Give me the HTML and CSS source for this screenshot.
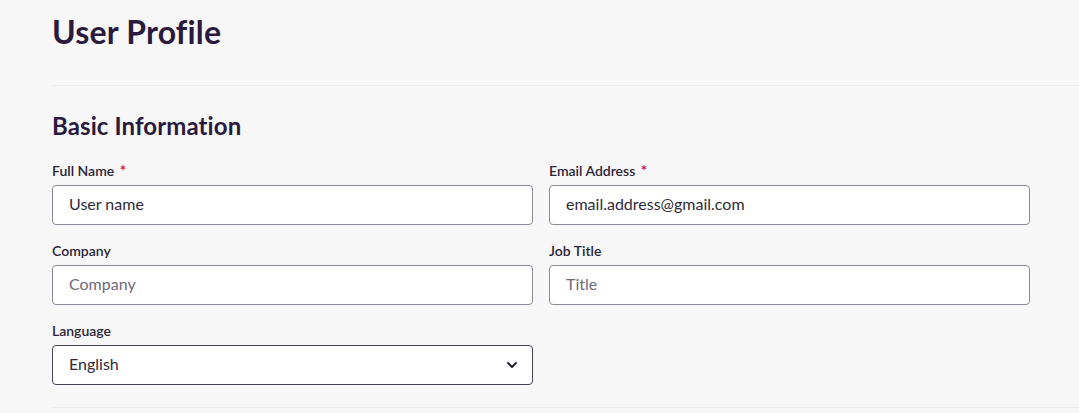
FILE: index.html
```html
<!DOCTYPE html>
<html lang="en">
<head>
<meta charset="utf-8">
<title>User Profile</title>
<link rel="stylesheet" href="styles.css">
</head>
<body>
<main class="page">
  <header class="page-header">
    <h1 class="page-title">User Profile</h1>
  </header>
  <section class="section">
    <h2 class="section-title">Basic Information</h2>
    <div class="form-grid">
      <div class="field">
        <label class="field-label">Full Name <span class="req">*</span></label>
        <div class="input"><span class="value">User name</span></div>
      </div>
      <div class="field">
        <label class="field-label">Email Address <span class="req">*</span></label>
        <div class="input"><span class="value">email.address@gmail.com</span></div>
      </div>
      <div class="field">
        <label class="field-label">Company</label>
        <div class="input"><span class="placeholder">Company</span></div>
      </div>
      <div class="field">
        <label class="field-label">Job Title</label>
        <div class="input"><span class="placeholder">Title</span></div>
      </div>
      <div class="field">
        <label class="field-label">Language</label>
        <div class="input select"><span class="value">English</span>
          <svg class="chevron" width="12" height="8" viewBox="0 0 12 8"><path d="M2 2 L6 6 L10 2" fill="none" stroke="#2b2536" stroke-width="2" stroke-linecap="round" stroke-linejoin="round"/></svg>
        </div>
      </div>
    </div>
  </section>
</main>
</body>
</html>
```
FILE: styles.css
```css
html, body {
  margin: 0;
  padding: 0;
  background: #f7f7f8;
}
body {
  font-family: "Lato", "Liberation Sans", sans-serif;
  color: #2a1b3d;
}
.page {
  padding-left: 52px;
}
.page-header {
  padding-top: 12px;
  padding-bottom: 33px;
  border-bottom: 1px solid #ececee;
}
.page-title {
  margin: 0;
  font-size: 32px;
  line-height: 40px;
  font-weight: 700;
  letter-spacing: 0.2px;
  color: #2a1b3d;
}
.section {
  padding-top: 26px;
  padding-bottom: 22px;
  border-bottom: 1px solid #ececee;
}
.section-title {
  margin: 0 0 23px 0;
  font-size: 24px;
  line-height: 28px;
  font-weight: 700;
  letter-spacing: 0.1px;
  color: #2a1b3d;
}
.form-grid {
  width: 978px;
  display: grid;
  grid-template-columns: 1fr 1fr;
  column-gap: 16px;
  row-gap: 18px;
}
.field {
  display: flex;
  flex-direction: column;
  gap: 6px;
}
.field-label {
  display: block;
  height: 16px;
  font-size: 14px;
  line-height: 16px;
  font-weight: 600;
  color: #2b2536;
}
.req {
  color: #c8154f;
  font-size: 15px;
  line-height: 0;
  font-weight: 700;
  margin-left: 2px;
}
.input {
  height: 40px;
  box-sizing: border-box;
  border: 1px solid #8d8896;
  border-radius: 4px;
  background: #ffffff;
  padding: 0 16px 4px 16px;
  display: flex;
  align-items: center;
  font-size: 16px;
}
.value {
  color: #2e2a38;
}
.placeholder {
  color: #6f6a78;
}
.select {
  border-color: #4a4356;
  justify-content: space-between;
  padding-right: 14px;
  padding-bottom: 0;
}
.select .value {
  padding-bottom: 4px;
}
.chevron {
  display: block;
}
```
